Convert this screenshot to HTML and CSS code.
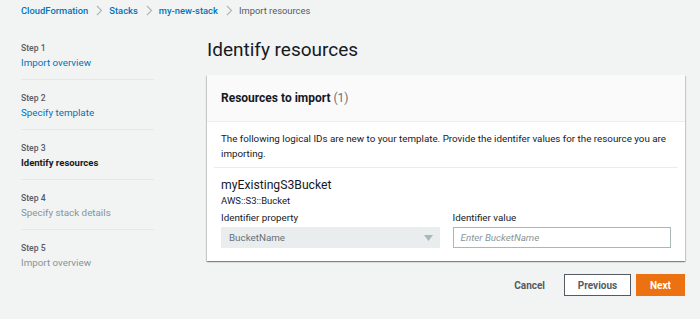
FILE: index.html
```html
<!DOCTYPE html>
<html>
<head>
<meta charset="utf-8">
<link rel="stylesheet" href="styles.css">
</head>
<body>
<nav class="crumbs">
  <a class="crumb">CloudFormation</a>
  <span class="sep"><svg width="7" height="11" viewBox="0 0 7 11"><path d="M1 1l4.5 4.5L1 10" fill="none" stroke="#aab7b8" stroke-width="1.1"/></svg></span>
  <a class="crumb">Stacks</a>
  <span class="sep"><svg width="7" height="11" viewBox="0 0 7 11"><path d="M1 1l4.5 4.5L1 10" fill="none" stroke="#aab7b8" stroke-width="1.1"/></svg></span>
  <a class="crumb">my-new-stack</a>
  <span class="sep"><svg width="7" height="11" viewBox="0 0 7 11"><path d="M1 1l4.5 4.5L1 10" fill="none" stroke="#aab7b8" stroke-width="1.1"/></svg></span>
  <span class="current">Import resources</span>
</nav>
<div class="layout">
  <aside class="steps">
    <div class="step"><div class="step-num">Step 1</div><div class="step-name link">Import overview</div></div>
    <div class="step"><div class="step-num">Step 2</div><div class="step-name link">Specify template</div></div>
    <div class="step"><div class="step-num">Step 3</div><div class="step-name active">Identify resources</div></div>
    <div class="step"><div class="step-num">Step 4</div><div class="step-name muted">Specify stack details</div></div>
    <div class="step last"><div class="step-num">Step 5</div><div class="step-name muted">Import overview</div></div>
  </aside>
  <main class="main">
    <h1 class="title">Identify resources</h1>
    <section class="card">
      <header class="card-head"><span class="card-title">Resources to import</span> <span class="count">(1)</span></header>
      <div class="card-body">
        <p class="desc">The following logical IDs are new to your template. Provide the identifer values for the resource you are importing.</p>
        <div class="resource">
          <div class="res-name">myExistingS3Bucket</div>
          <div class="res-type">AWS::S3::Bucket</div>
          <div class="fields">
            <div class="field">
              <div class="label">Identifier property</div>
              <div class="select"><span>BucketName</span><svg width="9" height="6" viewBox="0 0 9 6"><path d="M0 0h9L4.5 6z" fill="#aab7b8"/></svg></div>
            </div>
            <div class="field">
              <div class="label">Identifier value</div>
              <div class="input">Enter BucketName</div>
            </div>
          </div>
        </div>
      </div>
    </section>
    <div class="actions">
      <span class="cancel">Cancel</span>
      <span class="btn">Previous</span>
      <span class="btn primary">Next</span>
    </div>
  </main>
</div>
</body>
</html>
```
FILE: styles.css
```css
* { box-sizing: border-box; }
html, body { margin: 0; padding: 0; }
body {
  background: #f2f3f3;
  font-family: Roboto, "Liberation Sans", sans-serif;
  color: #16191f;
  width: 700px;
  height: 319px;
  overflow: hidden;
}
.crumbs {
  display: flex;
  align-items: center;
  padding: 0 0 2px 21px;
  height: 22px;
  font-size: 9.4px;
}
.crumb { color: #0073bb; font-weight: 500; }
.sep { display: flex; align-items: center; margin: 0 6px 0 8px; }
.current { color: #545b64; }
.layout { display: flex; }
.steps { width: 154px; padding: 8px 0 0 21px; flex-shrink: 0; }
.step {
  height: 50px;
  border-bottom: 1px solid #e6e8e8;
  padding-top: 12px;
  width: 133px;
}
.step.last { border-bottom: none; }
.step-num { font-size: 8.6px; font-weight: 500; color: #545b64; line-height: 12px; }
.step-name { font-size: 9.8px; line-height: 15px; margin-top: 1px; }
.step-name.link { color: #0073bb; }
.step-name.active { color: #16191f; font-weight: 700; font-size: 9.5px; }
.step-name.muted { color: #879596; }
.main { flex: 1; padding: 0 15px 0 53px; }
.title { font-size: 19px; font-weight: 400; margin: 16px 0 13px; line-height: 24px; }
.card {
  background: #fff;
  box-shadow: 0 1px 1px 0 rgba(0,28,36,0.3), 1px 1px 1px 0 rgba(0,28,36,0.15), -1px 1px 1px 0 rgba(0,28,36,0.15);
  width: 478px;
}
.card-head {
  background: #fafafa;
  height: 47px;
  padding: 16px 14px 0;
  border-bottom: 1px solid #eaeded;
  font-size: 12px;
}
.card-title { font-weight: 700; }
.count { color: #687078; }
.card-body { padding: 0 7px; }
.desc {
  margin: 0;
  padding: 9px 6px 6px 7px;
  font-size: 9.8px;
  line-height: 15px;
  border-bottom: 1px solid #eaeded;
}
.resource { padding: 9px 7px 13px; }
.res-name { font-size: 12.2px; line-height: 16px; }
.res-type { font-size: 9.5px; line-height: 14px; margin-top: 1px; }
.fields { display: flex; gap: 13px; margin-top: 3px; }
.field { width: 219px; }
.label { font-size: 9.8px; line-height: 13px; margin-bottom: 3px; }
.select {
  height: 21px;
  background: #eaeded;
  color: #687078;
  font-size: 9.8px;
  display: flex;
  align-items: center;
  justify-content: space-between;
  padding: 0 7px 0 8px;
}
.input {
  height: 21px;
  border: 1px solid #aab7b8;
  font-size: 9.8px;
  font-style: italic;
  color: #879596;
  display: flex;
  align-items: center;
  padding-left: 7px;
}
.actions {
  display: flex;
  justify-content: flex-end;
  align-items: center;
  margin-top: 13px;
  width: 478px;
}
.cancel { font-size: 10px; font-weight: 700; color: #545b64; margin-right: 19px; }
.btn {
  height: 22px;
  display: flex;
  align-items: center;
  justify-content: center;
  font-size: 10px;
  font-weight: 700;
  color: #545b64;
  background: #fff;
  border: 1px solid #545b64;
  width: 67px;
}
.btn.primary {
  background: #ec7211;
  border-color: #ec7211;
  color: #fff;
  width: 49px;
  margin-left: 5px;
}
```
